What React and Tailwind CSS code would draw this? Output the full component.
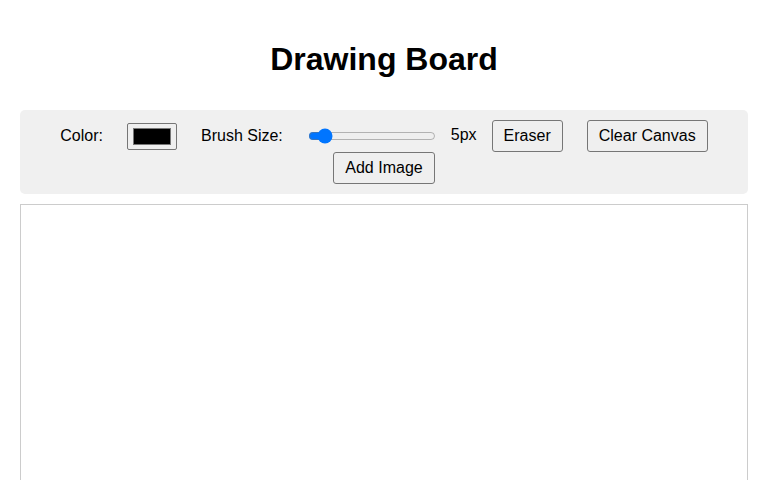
export default function App() {
  const btn =
    "h-[32px] px-[11px] border border-[#767676] rounded-[3px] bg-[#efefef] text-[16px] leading-[20px] text-black";
  return (
    <div className="p-[20px] bg-white text-black" style={{ fontFamily: '"Liberation Sans", Arial, sans-serif' }}>
      <h1 className="text-center text-[32px] font-bold leading-[37px] mt-[21px] mb-[32px]">Drawing Board</h1>
      <div className="bg-[#f0f0f0] rounded-[5px] p-[10px] flex flex-wrap justify-center items-center">
        <span className="mx-[12px] text-[16px] leading-[20px]">Color:</span>
        <div className="mx-[12px] w-[50px] h-[27px] border border-[#767676] rounded-[2px] bg-[#efefef] p-[4px] px-[5px]">
          <div className="w-full h-full bg-black border border-[#777]"></div>
        </div>
        <span className="mx-[12px] text-[16px] leading-[20px]">Brush Size:</span>
        <input type="range" min="1" max="50" defaultValue="5" className="ml-[13px] mr-[7px] w-[128px] h-[16px]" />
        <span className="ml-[8px] mr-[7px] text-[16px] leading-[20px] -mt-[2px]">5px</span>
        <button className={btn + " ml-[8px] mr-[12px]"}>Eraser</button>
        <button className={btn + " mx-[12px]"}>Clear Canvas</button>
        <button className={btn + " mx-[12px]"}>Add Image</button>
      </div>
      <div className="mt-[10px] h-[500px] border border-[#cccccc] bg-white"></div>
    </div>
  );
}
